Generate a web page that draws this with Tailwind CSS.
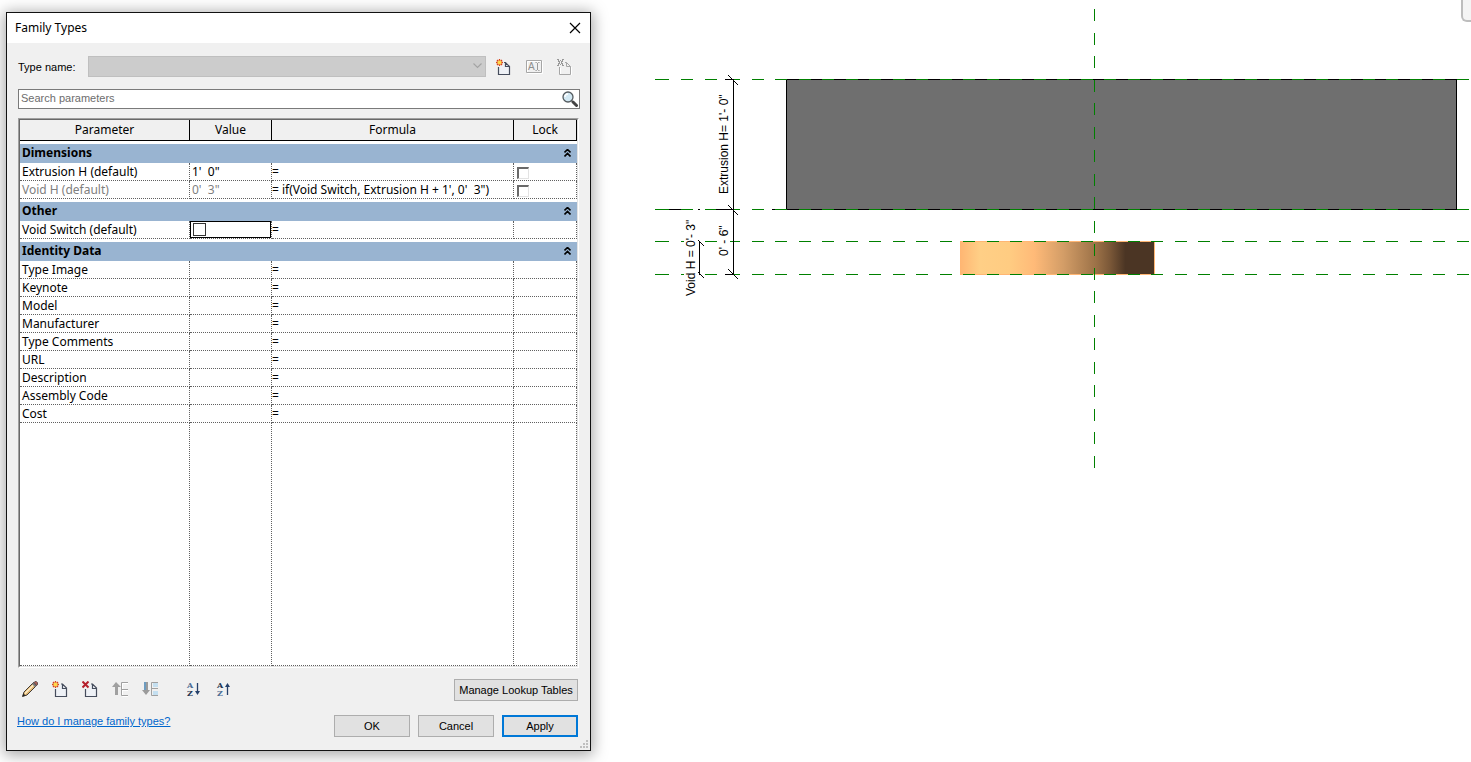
<!DOCTYPE html>
<html lang="en">
<head>
    <meta charset="UTF-8">
    <meta name="viewport" content="width=device-width, initial-scale=1.0">
    <title>Family Types</title>
    <script src="https://cdn.jsdelivr.net/npm/@tailwindcss/browser@4"></script>
</head>
<body class="bg-white text-black font-['Noto_Sans',sans-serif] text-[12px] leading-4">
    <div class="flex h-screen overflow-hidden">

        <!-- Family Types dialog -->
        <section class="relative z-10 flex flex-col w-[585px] shrink-0 mt-3 mb-[11px] ml-[6px] bg-[#f0f0f0] border border-[#111] shadow-[0_2px_14px_2px_rgba(0,0,0,0.35)]" aria-labelledby="dialogTitle">
            <header class="flex items-center justify-between h-[30px] bg-white pl-2 pr-[9px]">
                <h1 id="dialogTitle" class="text-[12px]">Family Types</h1>
                <button type="button" aria-label="Close">
                    <svg class="w-3 h-3" viewBox="0 0 12 12" stroke="#000" stroke-width="1.2"><path d="M1 1l10 10M11 1L1 11"/></svg>
                </button>
            </header>

            <div class="flex items-center pl-[11px] pr-[17px] mt-[13px]">
                <label for="typeName" class="w-[70px] font-['Liberation_Sans',sans-serif] text-[11px]">Type name:</label>
                <div class="relative w-[398px]">
                    <select id="typeName" disabled class="block appearance-none w-full h-[21px] bg-[#cccccc] border border-[#bfbfbf]"><option></option></select>
                    <svg class="absolute right-1 top-[7px] w-[9px] h-[6px]" viewBox="0 0 9 6" fill="none" stroke="#a3a3a3" stroke-width="1.1"><path d="M.5.5l4 4 4-4"/></svg>
                </div>
                <div class="flex gap-[14px] ml-[10px]">
                    <button type="button" aria-label="New type">
                        <svg class="w-4 h-4" viewBox="0 0 16 16" fill="none">
                            <path d="M2.5 8v7.5h11V7l-4-3.5H7V8z" fill="#eef1f6"/>
                            <path d="M2.500 8v7.500h11V7.500L9.500 3.500H8M9.500 3.500v4h4" stroke="#454c5c" stroke-width="1.2"/>
                            <path d="M3.500 0v7M0 3.500h7M1 1l5 5M6 1L1 6" stroke="#d8431a" stroke-width="1.3"/><circle cx="3.500" cy="3.500" r="2" fill="#ffd84a"/>
                        </svg>
                    </button>
                    <button type="button" disabled aria-label="Rename type">
                        <svg class="w-[17px] h-4" viewBox="0 0 17 16" fill="none">
                            <path d="M1.500 2.500h15v12h-15z" stroke="#fff"/>
                            <path d="M.5 1.500h15v12H.5z" stroke="#a6a6a6"/>
                            <text x="2" y="11" font-family="Liberation Sans, sans-serif" font-size="10" fill="#8f8f8f">A</text>
                            <path d="M9.500 3.500h1l1 1 1-1h1M11.500 4v7M9.500 11.500h1l1-1 1 1h1" stroke="#999"/>
                        </svg>
                    </button>
                    <button type="button" disabled aria-label="Delete type">
                        <svg class="w-4 h-4" viewBox="0 0 16 16" fill="none">
                            <path d="M3.500 9v7.500h11V8" stroke="#fff"/>
                            <path d="M2.500 8v7.500h11V7.500L9.500 3.500H8M9.500 3.500v4h4" stroke="#a6a6a6"/>
                            <path d="M0 .5h2M5 .5h2M1 1.500h1M3 1.500h1M5 1.500h1M1 2.500h2M4 2.500h2M2 3.500h1M4 3.500h1M1 4.500h2M4 4.500h2M1 5.500h1M3 5.500h1M5 5.500h1M0 6.500h2M5 6.500h2" stroke="#999"/>
                        </svg>
                    </button>
                </div>
            </div>

            <div class="relative ml-[11px] mr-[10px] mt-3">
                <input type="search" id="searchInput" aria-label="Search parameters" placeholder="Search parameters" class="block appearance-none w-full h-5 pl-[2px] pr-5 pb-[2px] bg-white border border-[#7a7a7a] font-['Liberation_Sans',sans-serif] text-[11px] placeholder:text-[#6d6d6d]">
                <svg class="absolute right-[2px] top-[2px] w-4 h-4" viewBox="0 0 16 16">
                    <path d="M9.500 9.500l2 2" stroke="#777" stroke-width="1.500"/>
                    <path d="M11 11l3.500 3.500" stroke="#444" stroke-width="3" stroke-linecap="round"/>
                    <circle cx="6" cy="6" r="5" fill="#d3e9f4" stroke="#555c60" stroke-width="1.300"/>
                    <path d="M3 6a3 3 0 0 1 3-3" fill="none" stroke="#fff" stroke-width="1.500"/>
                </svg>
            </div>

            <!-- Parameter grid -->
            <div class="flex-1 min-h-0 mx-[11px] mt-[9px] border-t border-l border-t-[#a0a0a0] border-l-[#a0a0a0] border-b border-r border-b-white border-r-white">
                <div class="h-full bg-white border border-t-[#696969] border-l-[#696969] border-b-[#e3e3e3] border-r-[#e3e3e3]">
                    <table class="table-fixed w-full h-full border-separate border-spacing-0">
                        <colgroup><col class="w-[170px]"><col class="w-[82px]"><col class="w-[242px]"><col></colgroup>
                        <thead>
                            <tr class="h-[21px] bg-[#f0f0f0]">
                                <th class="p-0 font-normal border-r border-b border-black">Parameter</th>
                                <th class="p-0 font-normal border-r border-b border-black">Value</th>
                                <th class="p-0 font-normal border-r border-b border-black">Formula</th>
                                <th class="p-0 font-normal border-r border-b border-black">Lock</th>
                            </tr>
                        </thead>
                        <tbody id="paramRows"></tbody>
                    </table>
                </div>
            </div>

            <div class="flex items-center pl-[15px] pr-3 mt-[11px]">
                <div class="flex gap-[14px] pb-[2px]">
                    <button type="button" aria-label="Edit parameter">
                        <svg class="w-4 h-4" viewBox="0 0 16 16">
                            <path d="M.5 15.500L2 11 11.500 1.500 14.500 4.500 5 14z" fill="#e3b973" stroke="#433b35"/>
                            <path d="M3 12.500L11.500 4" stroke="#fff0cf" stroke-width="1.200"/>
                            <path d="M10 3l2-2q1.500-1 3 .5t.5 2.500l-2.500 2z" fill="#777"/><path d="M12 1.500l1-1q1.500-.5 2.500 1v2l-1 1z" fill="#a95f58" stroke="#433b35" stroke-width=".6"/>
                            <path d="M.5 15.500l1-3 2 2z" fill="#222"/>
                        </svg>
                    </button>
                    <button type="button" aria-label="New parameter">
                        <svg class="w-4 h-4" viewBox="0 0 16 16" fill="none">
                            <path d="M3.500 8v7.500h11V7.500L10.500 3.500H8V8z" fill="#eef1f6"/>
                            <path d="M3.500 8v7.500h11V7L10.500 3H9M10.500 3v4.500h4" stroke="#454c5c" stroke-width="1.2"/>
                            <path d="M3.500 0v7M0 3.500h7M1 1l5 5M6 1L1 6" stroke="#d8431a" stroke-width="1.3"/><circle cx="3.500" cy="3.500" r="2" fill="#ffd84a"/>
                        </svg>
                    </button>
                    <button type="button" aria-label="Delete parameter">
                        <svg class="w-4 h-4" viewBox="0 0 16 16" fill="none">
                            <path d="M3.500 8v7.500h11V7.500L10.500 3.500H8V8z" fill="#eef1f6"/>
                            <path d="M3.500 8v7.500h11V7L10.500 3H9M10.500 3v4.500h4" stroke="#454c5c" stroke-width="1.2"/>
                            <path d="M.5.5l6 6M6.500.5l-6 6" stroke="#b5202c" stroke-width="2"/>
                        </svg>
                    </button>
                    <button type="button" disabled aria-label="Move parameter up">
                        <svg class="w-4 h-4" viewBox="0 0 16 16" fill="none">
                            <path d="M4 1L0 6h3v8h3V6h3z" fill="#a0a0a0"/>
                            <path d="M16 2.500h-5.500v13H17M10.500 9.500H17" stroke="#fff"/>
                            <path d="M16 1.500H9.500v13H16M9.500 8.500H16" stroke="#a0a0a0"/>
                        </svg>
                    </button>
                    <button type="button" disabled aria-label="Move parameter down">
                        <svg class="w-4 h-4" viewBox="0 0 16 16" fill="none">
                            <path d="M4 14L0 9h2V1h4v8h2z" fill="#9b9b9b"/><path d="M2 1h2v8H2z" fill="#6d9cc0"/>
                            <path d="M11 2h5v4h-5zM11 10h5v4h-5z" fill="#c4dff0"/>
                            <path d="M16 1.500H9.500v13H16M9.500 7.500H16" stroke="#a0a0a0"/>
                        </svg>
                    </button>
                </div>
                <div class="flex gap-[14px] ml-7 pb-[2px]">
                    <button type="button" aria-label="Sort ascending">
                        <svg class="w-4 h-4" viewBox="0 0 16 16">
                            <g font-family="DejaVu Serif, serif" font-weight="bold" font-size="8">
                                <text x="1" y="7" fill="#4c6c94">A</text><text x="1" y="15" fill="#1f3350">Z</text>
                            </g>
                            <path d="M11.500 2v10" stroke="#25406a" stroke-width="1.300"/><path d="M9 10h5l-2.500 4z" fill="#25406a"/>
                        </svg>
                    </button>
                    <button type="button" aria-label="Sort descending">
                        <svg class="w-4 h-4" viewBox="0 0 16 16">
                            <g font-family="DejaVu Serif, serif" font-weight="bold" font-size="8">
                                <text x="1" y="7" fill="#1f3350">A</text><text x="1" y="15" fill="#4c6c94">Z</text>
                            </g>
                            <path d="M11.500 4v10" stroke="#25406a" stroke-width="1.300"/><path d="M9 6h5l-2.500-4z" fill="#25406a"/>
                        </svg>
                    </button>
                </div>
                <button type="button" class="ml-auto w-[124px] h-[22px] bg-[#e1e1e1] border border-[#adadad] font-['Liberation_Sans',sans-serif] text-[11px]">Manage Lookup Tables</button>
            </div>

            <footer class="flex pl-[10px] pr-3 mt-[14px] mb-[13px] font-['Liberation_Sans',sans-serif] text-[11px]">
                <a href="#" class="text-[#0066cc] underline -mt-[2px]">How do I manage family types?</a>
                <div class="flex gap-2 ml-auto">
                    <button type="button" class="w-[76px] h-[22px] bg-[#e1e1e1] border border-[#adadad]">OK</button>
                    <button type="button" class="w-[76px] h-[22px] bg-[#e1e1e1] border border-[#adadad]">Cancel</button>
                    <button type="button" class="w-[76px] h-[22px] bg-[#e1e1e1] border-2 border-[#0078d7]">Apply</button>
                </div>
            </footer>
            <svg class="absolute right-[2px] bottom-[2px] w-2 h-2" viewBox="0 0 8 8" fill="#bfbfbf"><path d="M6 0h2v2H6zM3 3h2v2H3zM6 3h2v2H6zM0 6h2v2H0zM3 6h2v2H3zM6 6h2v2H6z"/></svg>
        </section>

        <!-- Elevation view -->
        <main class="relative flex-1 min-w-0">
            <svg class="block w-full h-full" viewBox="591 0 880 762" preserveAspectRatio="xMinYMin slice" fill="none" shape-rendering="crispEdges">
                <defs>
                    <linearGradient id="voidFill">
                        <stop offset="0" stop-color="#ffb673"/>
                        <stop offset=".1" stop-color="#ffcf86"/>
                        <stop offset=".25" stop-color="#ffcc82"/>
                        <stop offset=".38" stop-color="#ffba78"/>
                        <stop offset=".53" stop-color="#d39d67"/>
                        <stop offset=".7" stop-color="#9b7147"/>
                        <stop offset=".77" stop-color="#7b5838"/>
                        <stop offset=".85" stop-color="#4b3524"/>
                        <stop offset="1" stop-color="#4b3524"/>
                    </linearGradient>
                </defs>
                <path d="M786.500 79.500h670v130h-670z" fill="#6f6f6f" stroke="#000"/>
                <path d="M960.500 241.500h194v33h-194z" fill="url(#voidFill)" stroke="#ffb673"/>

                <!-- reference planes -->
                <g stroke="#008000">
                    <path d="M655 79.500h14M655 209.500h14M655 241.500h14M655 274.500h14"/>
                    <path d="M681 79.500h790M681 209.500h790M681 274.500h790M681 241.500h790" stroke-dasharray="12 11.500"/>
                    <path d="M1094.500 9v460" stroke-dasharray="12 11.500"/>
                </g>
                <path d="M669 209.500h12M698 209.500h2M716 209.500h18M772 209.500h3" stroke="#000"/>

                <!-- dimension lines -->
                <path d="M684 218h14v80h-14zM719 224h11v36h-11z" fill="#fff"/>
                <g stroke="#000">
                    <path d="M733.500 79v196M699.500 241v34M725 79.500h9M725 274.500h9"/>
                    <path d="M728 75l10 10M728 205l10 10M728 269l10 10M698 240l6 6M698 272l6 6"/>
                </g>
                <g fill="#000" font-family="Liberation Sans, sans-serif" font-size="12">
                    <text transform="translate(728 194) rotate(-90)">Extrusion H= 1'- 0"</text>
                    <text transform="translate(728 256) rotate(-90)">0' - 6"</text>
                    <text transform="translate(695 296) rotate(-90)">Void H = 0'- 3"</text>
                </g>
            </svg>
            <div class="absolute top-0 right-0 w-[10px] h-[22px] bg-[#f4f4f4] border-l-2 border-b-2 border-[#bdbdbd] rounded-bl-md"></div>
        </main>
    </div>

    <script>
        const groups = [
            { name: "Dimensions", rows: [
                { name: "Extrusion H (default)", value: "1'  0\"", formula: "=", lock: true },
                { name: "Void H (default)", value: "0'  3\"", formula: "= if(Void Switch, Extrusion H + 1', 0'  3\")", lock: true, driven: true }
            ] },
            { name: "Other", rows: [
                { name: "Void Switch (default)", toggle: true, formula: "=" }
            ] },
            { name: "Identity Data", rows: ["Type Image", "Keynote", "Model", "Manufacturer", "Type Comments", "URL", "Description", "Assembly Code", "Cost"].map(name => ({ name, formula: "=" })) }
        ];

        const cell = "p-0 whitespace-pre border-r border-b border-dotted border-[#606060]";
        const chevrons = `<svg class="w-[7px] h-2" viewBox="0 0 7 8" fill="none" stroke="#000" stroke-width="1.600"><path d="M.5 3.500l3-3 3 3M.5 7.500l3-3 3 3"/></svg>`;

        function renderRow(r) {
            const tone = r.driven ? "text-[#808080]" : "";
            const value = r.toggle
                ? `<div class="flex items-center h-[17px] pl-[2px] border border-black"><input type="checkbox" aria-label="${r.name}" class="appearance-none block w-[13px] h-[13px] bg-white border border-[#333]"></div>`
                : (r.value || "");
            const lock = r.lock
                ? `<input type="checkbox" aria-label="Lock ${r.name}" class="appearance-none block w-3 h-3 ml-[3px] mt-[2px] bg-white border-t-2 border-l-2 border-r border-b border-t-[#696969] border-l-[#696969] border-r-[#e3e3e3] border-b-[#e3e3e3]">`
                : "";
            return `
                <tr class="h-[18px]">
                    <td class="${cell} pl-[2px] ${tone}">${r.name}</td>
                    <td class="${cell} ${r.toggle ? "" : "pl-[2px]"} ${tone}">${value}</td>
                    <td class="${cell}">${r.formula}</td>
                    <td class="${cell}">${lock}</td>
                </tr>`;
        }

        document.getElementById("paramRows").innerHTML = groups.map(g => `
            <tr class="h-[22px]">
                <th colspan="4" class="p-0 pt-[3px] text-left">
                    <div class="flex items-center justify-between h-[19px] pl-[2px] pr-[6px] pb-[2px] bg-[#99b4d1]"><span>${g.name}</span><button type="button" aria-label="Collapse ${g.name}">${chevrons}</button></div>
                </th>
            </tr>
            ${g.rows.map(renderRow).join('')}
        `).join('') + `<tr>${`<td class="${cell}"></td>`.repeat(4)}</tr>`;
    </script>
</body>
</html>
